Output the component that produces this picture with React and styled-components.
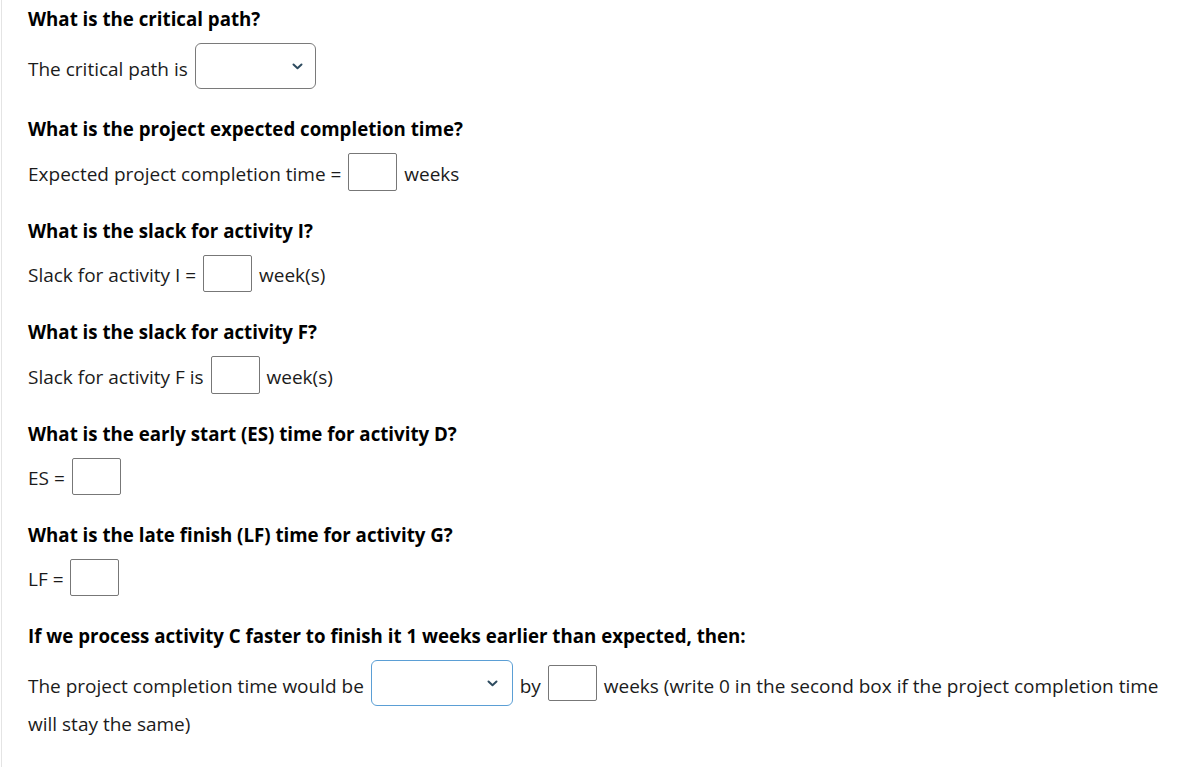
import React from "react";
import styled, { createGlobalStyle } from "styled-components";

const Global = createGlobalStyle`
  html, body { margin: 0; padding: 0; background: #ffffff; }
  body { font-family: "Open Sans", "Noto Sans", sans-serif; color: #1b1b1b; }
`;

const Page = styled.div`
  margin-left: 1px;
  border-left: 1px solid #e4e4e4;
  min-height: 767px;
  box-sizing: border-box;
  padding: 7px 20px 0 26px;
  width: 1191px;
`;

const Block = styled.section`
  margin-bottom: 28px;
`;

const Heading = styled.h3`
  margin: 0 0 12px 0;
  font-size: 18.7px;
  line-height: 24px;
  font-weight: 700;
  color: #000;
`;

const Row = styled.div`
  font-size: 19px;
  line-height: ${(p) => p.$lh || 32}px;
  color: #1b1b1b;
`;

const Input = styled.span`
  display: inline-block;
  vertical-align: ${(p) => (p.$va != null ? p.$va : -10)}px;
  box-sizing: border-box;
  width: 49px;
  height: ${(p) => p.$h || 37}px;
  border: 1px solid #777;
  border-radius: 2px;
  background: #fff;
  margin: 0 2px;
`;

const Select = styled.span`
  position: relative;
  display: inline-block;
  vertical-align: -13px;
  box-sizing: border-box;
  width: ${(p) => p.$w}px;
  height: 46px;
  border: 1px solid ${(p) => (p.$focus ? "#5b9fd5" : "#7a7a7a")};
  border-radius: 6px;
  background: #fff;
  margin: 0 2px;
`;

const ChevronIcon = styled.svg`
  position: absolute;
  right: ${(p) => p.$r}px;
  top: 50%;
  margin-top: -3px;
  display: block;
`;

const Chevron = ({ r }) => (
  <ChevronIcon $r={r} width="11" height="7" viewBox="0 0 11 7" fill="none">
    <path d="M1.5 1.5 L5.5 5.2 L9.5 1.5" stroke="#2d4b5f" strokeWidth="2" strokeLinecap="round" strokeLinejoin="round" />
  </ChevronIcon>
);

export default function App() {
  return (
    <>
      <Global />
      <Page>
        <Block>
          <Heading>What is the critical path?</Heading>
          <Row>
            The critical path is{" "}
            <Select $w={121}>
              <Chevron r={12} />
            </Select>
          </Row>
        </Block>
        <Block>
          <Heading>What is the project expected completion time?</Heading>
          <Row>
            Expected project completion time ={" "}
            <Input $h={38} /> weeks
          </Row>
        </Block>
        <Block>
          <Heading>What is the slack for activity I?</Heading>
          <Row>
            Slack for activity I ={" "}
            <Input /> week(s)
          </Row>
        </Block>
        <Block>
          <Heading>What is the slack for activity F?</Heading>
          <Row>
            Slack for activity F is{" "}
            <Input $h={38} /> week(s)
          </Row>
        </Block>
        <Block>
          <Heading>What is the early start (ES) time for activity D?</Heading>
          <Row>
            ES ={" "}
            <Input />
          </Row>
        </Block>
        <Block>
          <Heading>What is the late finish (LF) time for activity G?</Heading>
          <Row>
            LF ={" "}
            <Input />
          </Row>
        </Block>
        <Block>
          <Heading>
            If we process activity C faster to finish it 1 weeks earlier than expected, then:
          </Heading>
          <Row $lh={37}>
            The project completion time would be{" "}
            <Select $w={142} $focus>
              <Chevron r={14} />
            </Select>{" "}
            by <Input $h={36} $va={-8} /> weeks (write 0 in the second box if the project completion time will stay the same)
          </Row>
        </Block>
      </Page>
    </>
  );
}
